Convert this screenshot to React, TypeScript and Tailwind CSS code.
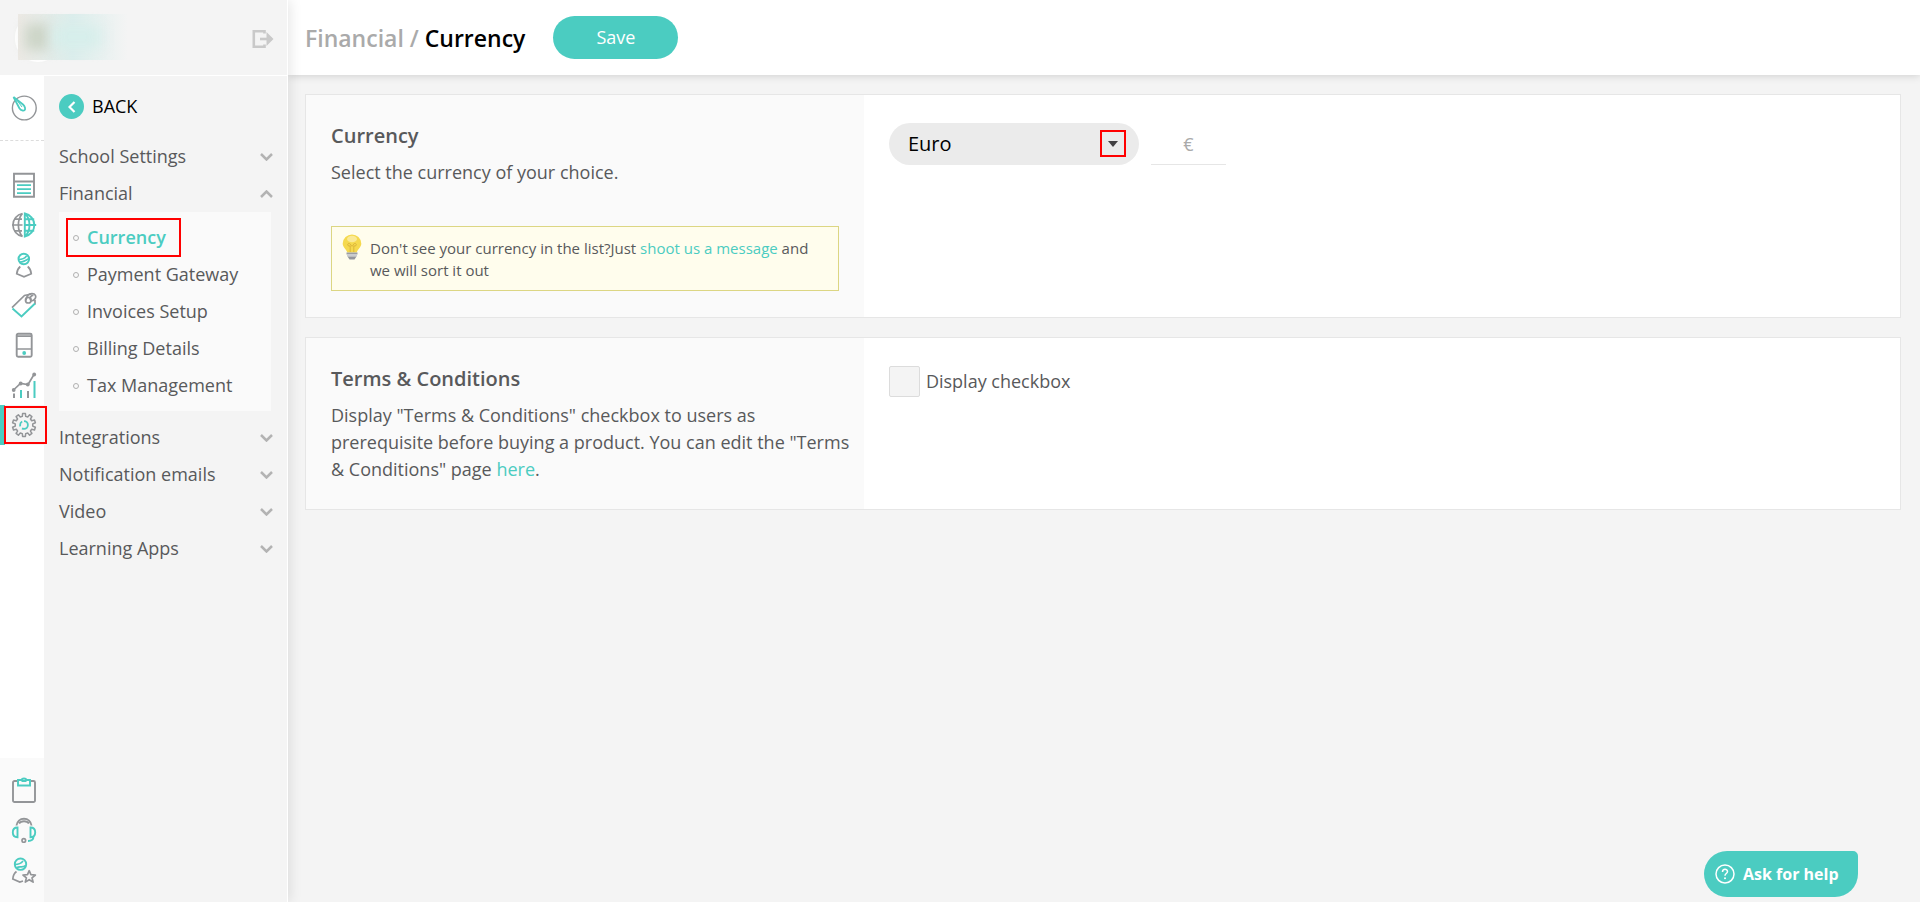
import React from "react";

const TEAL = "#4bccc1";
const GREY = "#939598";

type IconProps = { children: React.ReactNode };

const Icon: React.FC<IconProps> = ({ children }) => (
  <svg
    className="h-[26px] w-[26px]"
    viewBox="0 0 26 26"
    fill="none"
    stroke={GREY}
    strokeWidth="1.7"
    aria-hidden="true"
  >
    {children}
  </svg>
);

const DashboardIcon = () => (
  <Icon>
    <circle cx="13.3" cy="13" r="11.9" strokeWidth="1.4" />
    <path d="M2.500 2l9.500 7.500c2.200 2 2.600 4.600 1.600 5.600s-3.600.6-5.200-1.900z" stroke={TEAL} strokeWidth="1.800" />
    <path d="M6.500 6l4.500 6" stroke={TEAL} strokeWidth="1" />
  </Icon>
);

const PagesIcon = () => (
  <Icon>
    <path d="M3 1.700h20v23H3zM3 9.500h20" strokeWidth="1.900" />
    <path d="M6 13.200h14M6 17.200h14M6 21.200h14" stroke={TEAL} />
  </Icon>
);

const GlobeIcon = () => (
  <Icon>
    <path d="M11.500 1.500a11.700 11.700 0 0 0 0 23M11.500 1.500c-5.500 6-5.500 17 0 23M1 13h10.500M3 7.200h8M3 18.800h8" />
    <path
      d="M13.800 1.500a11.700 11.700 0 0 1 0 23zM14 1.500c6 6 6 17 0 23M13.500 13h11.700M13.500 7.200h9.700M13.500 18.800h9.700"
      stroke={TEAL}
      strokeWidth="1.900"
    />
  </Icon>
);

const UserIcon = () => (
  <Icon>
    <g stroke={TEAL}>
      <circle cx="12.800" cy="7" r="5.300" strokeWidth="1.900" />
      <path d="M7.600 7.500c3.500 0 6-1 8-3.500M9 10c3 0 6-1.500 9-3.500" />
    </g>
    <path d="M9.300 14.500c-1.800 1.500-3.300 4.500-3.600 7.300l7.300 3 7.300-3c-.3-2.800-1.800-5.800-3.600-7.300" />
  </Icon>
);

const TagIcon = () => (
  <Icon>
    <path d="M1 15.700L13.500 3.500l7-1.500M24 12.500V8" />
    <path d="M1.500 16.500l9 8 13.500-13" stroke={TEAL} strokeWidth="1.900" />
    <circle cx="17.300" cy="8.200" r="2.800" />
    <path d="M15 8.500c0-4 2.500-7 6-7s4.500 3 3 5.300-4.500 2.800-4.800.4 1.300-4 3.300-3.700" />
  </Icon>
);

const MobileIcon = () => (
  <Icon>
    <rect x="5.700" y="1.700" width="15" height="23" rx="1.500" strokeWidth="1.900" />
    <path d="M5.700 4.200h15M5.700 17h15" />
    <circle cx="13.200" cy="21" r="1.900" fill={TEAL} stroke="none" />
  </Icon>
);

const ReportsIcon = () => (
  <Icon>
    <path d="M2.500 18l7-6.500 7.500 1L23 2.500" />
    <g fill={GREY} stroke="none">
      <circle cx="2.700" cy="18" r="1.900" />
      <circle cx="9.700" cy="11.500" r="1.900" />
      <circle cx="16.800" cy="12.500" r="1.900" />
      <circle cx="23.200" cy="2.500" r="1.900" />
    </g>
    <path d="M3 21.500V26M17 19v7" strokeWidth="2" />
    <path d="M10 18v8M23.500 9v17" stroke={TEAL} strokeWidth="2" />
  </Icon>
);

const point = (radius: number, degrees: number) => {
  const a = (degrees * Math.PI) / 180;
  return `${(13 + radius * Math.cos(a)).toFixed(2)} ${(13 + radius * Math.sin(a)).toFixed(2)}`;
};

// ten teeth, one every 36 degrees, starting at the top
const gearPath =
  "M" +
  Array.from({ length: 10 }, (_, i) => i * 36 - 90)
    .map((a) => [point(8.8, a - 11), point(11.6, a - 7), point(11.6, a + 7), point(8.8, a + 11)].join("L"))
    .join("L") +
  "Z";

const SettingsIcon = () => (
  <Icon>
    <path d={gearPath} strokeWidth="1.500" strokeLinejoin="round" />
    <circle cx="13" cy="13" r="3.900" stroke={TEAL} strokeWidth="1.800" strokeDasharray="14 2.500 5.500 2.500" transform="rotate(-90 13 13)" />
  </Icon>
);

const ClipboardIcon = () => (
  <Icon>
    <path
      d="M6 4H3.500a1.500 1.500 0 0 0-1.500 1.500v18A1.500 1.500 0 0 0 3.500 25h19a1.500 1.500 0 0 0 1.500-1.500v-18A1.500 1.500 0 0 0 22.500 4H20"
      strokeWidth="1.900"
    />
    <path d="M7 3h3.500c.5-2 4.500-2 5 0H19v5.500H7zM10.500 4h5" stroke={TEAL} strokeWidth="1.900" />
  </Icon>
);

const SupportIcon = () => (
  <Icon>
    <path d="M5.500 8.500c.5-4 3.500-6.700 7.500-6.700s7 2.700 7.500 6.700M8 6.500c2-3 8-3 10 0" strokeWidth="1.900" />
    <path
      d="M6.500 10.500c-3 0-4.700 2-4.700 4.800s1.700 5 4.700 5zM19.500 10.500c3 0 4.700 2 4.700 4.800s-1.700 5-4.700 5zM22.500 19.500c0 3-2 4.500-5.500 4.500"
      stroke={TEAL}
      strokeWidth="1.900"
    />
    <circle cx="12.800" cy="23.500" r="1.800" />
  </Icon>
);

const AmbassadorIcon = () => (
  <Icon>
    <g stroke={TEAL}>
      <circle cx="9.500" cy="7.200" r="5.700" strokeWidth="1.900" />
      <path d="M4 7.500c3.500 0 6-1 8-3.500M6 11c1.500-2.500 6 .5 8.500-2.500" />
    </g>
    <path d="M5.500 14.500C3.500 16 2 19 1.800 22l7 3 3.200-1" />
    <path
      d="M18.200 13.700l1.700 3.900 4.500.4-3.400 2.800 1.100 4.300-3.900-2.400-3.900 2.400 1.100-4.300-3.400-2.800 4.500-.4z"
      strokeLinejoin="round"
    />
  </Icon>
);

const LogoutIcon = () => (
  <svg className="h-5 w-[22px]" viewBox="0 0 22 20" fill="none" stroke="#c9c9c9" strokeWidth="2.600" aria-hidden="true">
    <path d="M12.500 4.500V2.300H1.800v15.500h10.700v-2.300" />
    <path d="M8 10h12" />
    <path d="M14.500 3l7 7-7 7z" fill="#c9c9c9" stroke="none" />
  </svg>
);

const Chevron: React.FC<{ up?: boolean }> = ({ up }) => (
  <svg className="h-2 w-[13px]" viewBox="0 0 13 8" fill="none" stroke="#b3b3b3" strokeWidth="2.500" aria-hidden="true">
    <path d={up ? "M1 7l5.500-5.500L12 7" : "M1 1l5.500 5.500L12 1"} />
  </svg>
);

const BulbIcon = () => (
  <svg className="h-[26px] w-5 shrink-0" viewBox="0 0 20 26" aria-hidden="true">
    <path d="M10 .5a9.300 9.300 0 0 0-9.300 9c0 4 3.800 5.500 4.500 9h9.600c.7-3.500 4.500-5 4.500-9A9.300 9.300 0 0 0 10 .5z" fill="#f5d94e" />
    <ellipse cx="10" cy="5" rx="5" ry="3.200" fill="#fae996" />
    <path
      d="M8.200 18V12c-3.500.5-3-3-.8-2.500 1.800.4.800 2.500 2.600 2.500s.8-2.100 2.600-2.500c2.200-.5 2.700 3-.8 2.500v6"
      fill="none"
      stroke="#dcb53a"
      strokeWidth="1"
    />
    <path d="M4.500 18.500h11v2h-11z" fill="#9b9da3" />
    <path d="M5 20.500h10v2H5z" fill="#c9cbd0" />
    <path d="M5.500 22.500h9L12.500 25.500h-5z" fill="#94969c" />
  </svg>
);

const railItems = [
  { label: "Pages", icon: <PagesIcon /> },
  { label: "Website", icon: <GlobeIcon /> },
  { label: "Users", icon: <UserIcon /> },
  { label: "Marketing", icon: <TagIcon /> },
  { label: "Mobile", icon: <MobileIcon /> },
  { label: "Reports", icon: <ReportsIcon /> },
];

const railFooter = [
  { label: "Tasks", icon: <ClipboardIcon /> },
  { label: "Support", icon: <SupportIcon /> },
  { label: "Ambassador", icon: <AmbassadorIcon /> },
];

const financialItems = ["Currency", "Payment Gateway", "Invoices Setup", "Billing Details", "Tax Management"];

const RailLink: React.FC<{ label: string; children: React.ReactNode }> = ({ label, children }) => (
  <a href="#" aria-label={label} className="flex h-10 items-center pl-[11px]">
    {children}
  </a>
);

const Rail = () => (
  <nav className="flex w-11 shrink-0 flex-col bg-white">
    <div className="border-b border-dashed border-[#dcdcdc] pt-3 pb-3">
      <RailLink label="Dashboard">
        <DashboardIcon />
      </RailLink>
    </div>
    <div className="pt-6">
      {railItems.map((item) => (
        <RailLink key={item.label} label={item.label}>
          {item.icon}
        </RailLink>
      ))}
      <div className="relative border-l-[5px] border-[#4bccc1] bg-[#f4f4f4]">
        <a href="#" aria-label="Settings" className="flex h-10 items-center pl-[6px]">
          <SettingsIcon />
        </a>
        <span className="pointer-events-none absolute inset-y-px -left-px z-10 w-[43px] border-2 border-[#ff0000]" />
      </div>
    </div>
    <div className="mt-auto bg-[#fafafa] pt-3 pb-3">
      {railFooter.map((item) => (
        <RailLink key={item.label} label={item.label}>
          {item.icon}
        </RailLink>
      ))}
    </div>
  </nav>
);

const MenuRow: React.FC<{ label: string; open?: boolean }> = ({ label, open }) => (
  <button type="button" aria-expanded={!!open} className="flex h-[37px] w-full items-center justify-between pr-[14px]">
    <span>{label}</span>
    <Chevron up={open} />
  </button>
);

const Menu = () => (
  <nav className="min-w-0 flex-1 pt-[18px] pl-[15px] text-[18px] font-medium text-[#58595b]">
    <a href="#" className="mb-[19px] flex h-[25px] items-center gap-2 text-black">
      <span className="flex h-[25px] w-[25px] items-center justify-center rounded-full bg-[#4bccc1]">
        <svg className="h-3 w-2" viewBox="0 0 8 12" fill="none" stroke="white" strokeWidth="2.200" aria-hidden="true">
          <path d="M6.500 1L1.500 6l5 5" />
        </svg>
      </span>
      BACK
    </a>
    <MenuRow label="School Settings" />
    <MenuRow label="Financial" open />
    <ul className="mr-4 mb-2 bg-[#fafafa] py-[7px] pl-[14px]">
      {financialItems.map((item, i) => (
        <li key={item} className="relative flex h-[37px] items-center gap-2">
          <span className="h-[6px] w-[6px] rounded-full border border-[#b0b0b0]" />
          <a href="#" className={i === 0 ? "font-semibold text-[#4bccc1]" : undefined}>
            {item}
          </a>
          {i === 0 && (
            <span className="pointer-events-none absolute -inset-y-px -left-[7px] w-[115px] border-2 border-[#ff0000]" />
          )}
        </li>
      ))}
    </ul>
    <MenuRow label="Integrations" />
    <MenuRow label="Notification emails" />
    <MenuRow label="Video" />
    <MenuRow label="Learning Apps" />
  </nav>
);

const Sidebar = () => (
  <aside className="relative z-20 flex w-72 shrink-0 flex-col border-r border-white bg-[#f4f4f4] shadow-[2px_0_12px_rgba(0,0,0,0.1)]">
    <div className="flex h-[76px] items-center justify-between border-b border-white pt-[2px] pr-[13px] pl-[15px]">
      <div className="relative mb-1 h-[46px] w-32">
        <span className="absolute top-0 left-0 h-12 w-[46px] rounded-full bg-white" />
        <span className="absolute top-0 left-[3px] h-[46px] w-[110px] bg-linear-to-r from-[#ece9e4] via-[#dceeec] to-[#f4f4f4]" />
        <span className="absolute top-[10px] left-[10px] h-[26px] w-6 bg-[#cdd5c8] blur-[6px]" />
        <span className="absolute top-[12px] left-[38px] h-[22px] w-12 bg-[#d6eeeb] blur-[7px]" />
      </div>
      <button type="button" aria-label="Log out">
        <LogoutIcon />
      </button>
    </div>
    <div className="flex flex-1">
      <Rail />
      <Menu />
    </div>
  </aside>
);

type CardProps = { title: string; info: React.ReactNode; children: React.ReactNode };

const Card: React.FC<CardProps> = ({ title, info, children }) => (
  <section className="flex border border-[#e6e6e6] bg-white">
    <div className="w-[35%] bg-[#fafafa] py-[26px] pr-3 pl-[25px]">
      <h2 className="text-[20px] leading-[30px] font-semibold">{title}</h2>
      {info}
    </div>
    <div className="flex-1 px-[25px] py-7">{children}</div>
  </section>
);

const App: React.FC = () => {
  return (
    <div className="flex min-h-screen bg-[#f4f4f4] font-['Open_Sans','Noto_Sans',sans-serif] text-[#58595b]">
      <Sidebar />
      <div className="min-w-0 flex-1">
        <header className="relative z-10 flex h-[75px] items-center gap-7 bg-white pl-[17px] shadow-[0_1px_8px_rgba(0,0,0,0.15)]">
          <h1 className="pt-[2px] text-[23px] font-semibold text-[#aaaaaa]">
            Financial / <span className="text-black">Currency</span>
          </h1>
          <button type="button" className="h-[43px] w-[125px] rounded-full bg-[#4bccc1] text-[18px] text-white">
            Save
          </button>
        </header>
        <main className="flex flex-col gap-[19px] py-[19px] pr-[19px] pl-[17px]">
          <Card
            title="Currency"
            info={
              <>
                <p className="mt-2 text-[18px] leading-[27px]">Select the currency of your choice.</p>
                <div className="mt-10 mr-[13px] flex gap-2 border border-[#dcd683] bg-[#fffded] pt-[7px] pr-2 pb-[9px] pl-[10px]">
                  <BulbIcon />
                  <p className="pt-[3px] text-[15px] leading-[22px]">
                    Don't see your currency in the list?Just{" "}
                    <a href="#" className="text-[#4bccc1]">
                      shoot us a message
                    </a>{" "}
                    and we will sort it out
                  </p>
                </div>
              </>
            }
          >
            <div className="flex gap-3">
              <div className="relative">
                <select
                  aria-label="Currency"
                  className="h-[42px] w-[250px] appearance-none rounded-full bg-[#ebebeb] px-[19px] text-[20px] text-black"
                >
                  <option>Euro</option>
                </select>
                <span className="pointer-events-none absolute top-[7px] right-[13px] flex h-[27px] w-[26px] items-center justify-center border-2 border-[#ff0000]">
                  <svg className="h-[6px] w-[10px]" viewBox="0 0 10 6" fill="#414042" aria-hidden="true">
                    <path d="M0 0h10L5 6z" />
                  </svg>
                </span>
              </div>
              <input
                aria-label="Currency symbol"
                readOnly
                value="€"
                className="h-[42px] w-[75px] border-b border-[#e6e6e6] text-center text-[18px] text-[#aaaaaa]"
              />
            </div>
          </Card>
          <Card
            title="Terms & Conditions"
            info={
              <p className="mt-2 text-[18px] leading-[27px]">
                Display "Terms & Conditions" checkbox to users as prerequisite before buying a product. You can edit the
                "Terms & Conditions" page{" "}
                <a href="#" className="text-[#4bccc1]">
                  here
                </a>
                .
              </p>
            }
          >
            <label className="flex items-center gap-[6px] text-[18px]">
              <input
                type="checkbox"
                className="h-[31px] w-[31px] appearance-none rounded-xs border border-[#dcdcdc] bg-[#f4f4f4]"
              />
              Display checkbox
            </label>
          </Card>
        </main>
      </div>
      <button
        type="button"
        className="fixed right-[62px] bottom-[5px] z-30 flex h-[46px] w-[154px] items-center gap-2 rounded-[23px] rounded-tr-[5px] bg-[#4bccc1] pl-[11px] text-[16px] font-bold text-white"
      >
        <svg className="h-5 w-5" viewBox="0 0 20 20" fill="none" stroke="white" strokeWidth="1.500" aria-hidden="true">
          <circle cx="10" cy="10" r="9" />
          <path d="M7.500 8c0-3.500 5-3.500 5-.5 0 2-2.500 2-2.500 4.200" />
          <circle cx="10" cy="14.300" r="1" fill="white" stroke="none" />
        </svg>
        Ask for help
      </button>
    </div>
  );
};

export default App;
